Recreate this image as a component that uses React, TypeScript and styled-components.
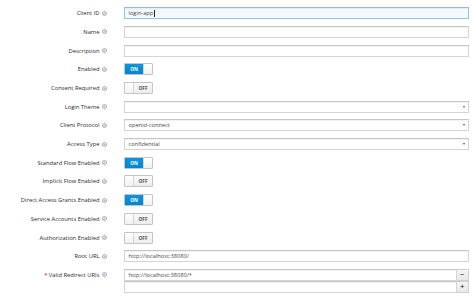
import styled, { createGlobalStyle } from "styled-components";

const GlobalStyle = createGlobalStyle`
  html, body {
    margin: 0;
    padding: 0;
    background: #ffffff;
  }
  body {
    font-family: "Open Sans", "Liberation Sans", sans-serif;
    color: #363636;
  }
`;

const Form = styled.div`
  display: flex;
  flex-direction: column;
  gap: 6.69px;
  padding-top: 7.3px;
  width: 474px;
`;

const Row = styled.div`
  display: grid;
  grid-template-columns: 107px 345px;
  column-gap: 17px;
  align-items: start;
`;

const Label = styled.div`
  display: flex;
  align-items: center;
  justify-content: flex-end;
  gap: 2.5px;
  height: 12px;
  font-size: 5.8px;
  font-weight: 400;
  color: #2a2a2a;
  white-space: nowrap;
`;

const Required = styled.span`
  color: #c00;
  margin-right: 1.5px;
`;

const Field = styled.div<{ $focused?: boolean }>`
  display: flex;
  align-items: center;
  position: relative;
  box-sizing: border-box;
  height: 12px;
  width: 100%;
  padding: 0 3.5px;
  border: 1px solid ${({ $focused }) => ($focused ? "#93c3ea" : "#d4d4d4")};
  border-top-color: ${({ $focused }) => ($focused ? "#8dbde6" : "#c6c6c6")};
  background: ${({ $focused }) => ($focused ? "#f3f9fe" : "#ffffff")};
  box-shadow: inset 0 1px 1px rgba(3, 3, 3, 0.06);
  font-size: 5.7px;
  color: #4a4a4a;
  white-space: nowrap;
`;

const Caret = styled.span`
  display: inline-block;
  width: 0.6px;
  height: 7px;
  background: #222;
  margin-left: 0.3px;
`;

const SelectArrow = styled.span`
  position: absolute;
  right: 3.5px;
  top: 50%;
  margin-top: -1px;
  border-left: 1.5px solid transparent;
  border-right: 1.5px solid transparent;
  border-top: 2px solid #4d5258;
`;

const Stack = styled.div`
  display: flex;
  flex-direction: column;
`;

const InputGroup = styled.div`
  display: flex;
  width: 100%;
`;

const AddonButton = styled.div`
  flex: 0 0 12.5px;
  box-sizing: border-box;
  height: 12px;
  display: flex;
  align-items: center;
  justify-content: center;
  border: 1px solid #cfcfcf;
  border-left: none;
  background: linear-gradient(#f5f5f5, #e8e8e8);
  font-size: 7px;
  font-weight: 700;
  line-height: 1;
  color: #4d5258;
`;

const Switch = styled.div`
  display: flex;
  box-sizing: border-box;
  width: 29px;
  height: 12px;
  border: 1px solid #c4c4c4;
  border-radius: 1px;
  overflow: hidden;
  background: #fff;
`;

const SwitchLabel = styled.div<{ $on?: boolean }>`
  flex: 0 0 18px;
  display: flex;
  align-items: center;
  justify-content: center;
  font-size: 4.8px;
  font-weight: 700;
  color: ${({ $on }) => ($on ? "#ffffff" : "#4d5258")};
  background: ${({ $on }) =>
    $on ? "linear-gradient(#0b95dc, #0086cf)" : "linear-gradient(#fafafa, #ededed)"};
`;

const SwitchHandle = styled.div<{ $left?: boolean }>`
  flex: 1;
  background: linear-gradient(#ffffff, #f1f1f1);
  border-${({ $left }) => ($left ? "right" : "left")}: 1px solid #d4d4d4;
`;

const HelpIcon = () => (
  <svg width="5" height="5" viewBox="0 0 16 16">
    <circle cx="8" cy="8" r="7.5" fill="#9a9c9e" />
    <circle cx="8" cy="8" r="4.6" fill="#f4f4f4" />
    <circle cx="8" cy="8" r="1.8" fill="#9a9c9e" />
  </svg>
);

const FieldLabel = ({ text, required }: { text: string; required?: boolean }) => (
  <Label>
    <span>
      {required && <Required>*</Required>}
      {text}
    </span>
    <HelpIcon />
  </Label>
);

const Toggle = ({ on }: { on: boolean }) => (
  <Switch>
    {on ? (
      <>
        <SwitchLabel $on>ON</SwitchLabel>
        <SwitchHandle />
      </>
    ) : (
      <>
        <SwitchHandle $left />
        <SwitchLabel>OFF</SwitchLabel>
      </>
    )}
  </Switch>
);

const TextRow = ({ label, value }: { label: string; value?: string }) => (
  <Row>
    <FieldLabel text={label} />
    <Field>{value}</Field>
  </Row>
);

const SelectRow = ({ label, value }: { label: string; value?: string }) => (
  <Row>
    <FieldLabel text={label} />
    <Field>
      {value}
      <SelectArrow />
    </Field>
  </Row>
);

const ToggleRow = ({ label, on }: { label: string; on: boolean }) => (
  <Row>
    <FieldLabel text={label} />
    <Toggle on={on} />
  </Row>
);

export default function App() {
  return (
    <>
      <GlobalStyle />
      <Form>
        <Row>
          <FieldLabel text="Client ID" />
          <Field $focused>
            login-app
            <Caret />
          </Field>
        </Row>
        <TextRow label="Name" />
        <TextRow label="Description" />
        <ToggleRow label="Enabled" on />
        <ToggleRow label="Consent Required" on={false} />
        <SelectRow label="Login Theme" />
        <SelectRow label="Client Protocol" value="openid-connect" />
        <SelectRow label="Access Type" value="confidential" />
        <ToggleRow label="Standard Flow Enabled" on />
        <ToggleRow label="Implicit Flow Enabled" on={false} />
        <ToggleRow label="Direct Access Grants Enabled" on />
        <ToggleRow label="Service Accounts Enabled" on={false} />
        <ToggleRow label="Authorization Enabled" on={false} />
        <TextRow label="Root URL" value="http://localhost:38080/" />
        <Row>
          <FieldLabel text="Valid Redirect URIs" required />
          <Stack>
            <InputGroup>
              <Field>http://localhost:38080/*</Field>
              <AddonButton>−</AddonButton>
            </InputGroup>
            <InputGroup>
              <Field />
              <AddonButton>+</AddonButton>
            </InputGroup>
          </Stack>
        </Row>
      </Form>
    </>
  );
}
